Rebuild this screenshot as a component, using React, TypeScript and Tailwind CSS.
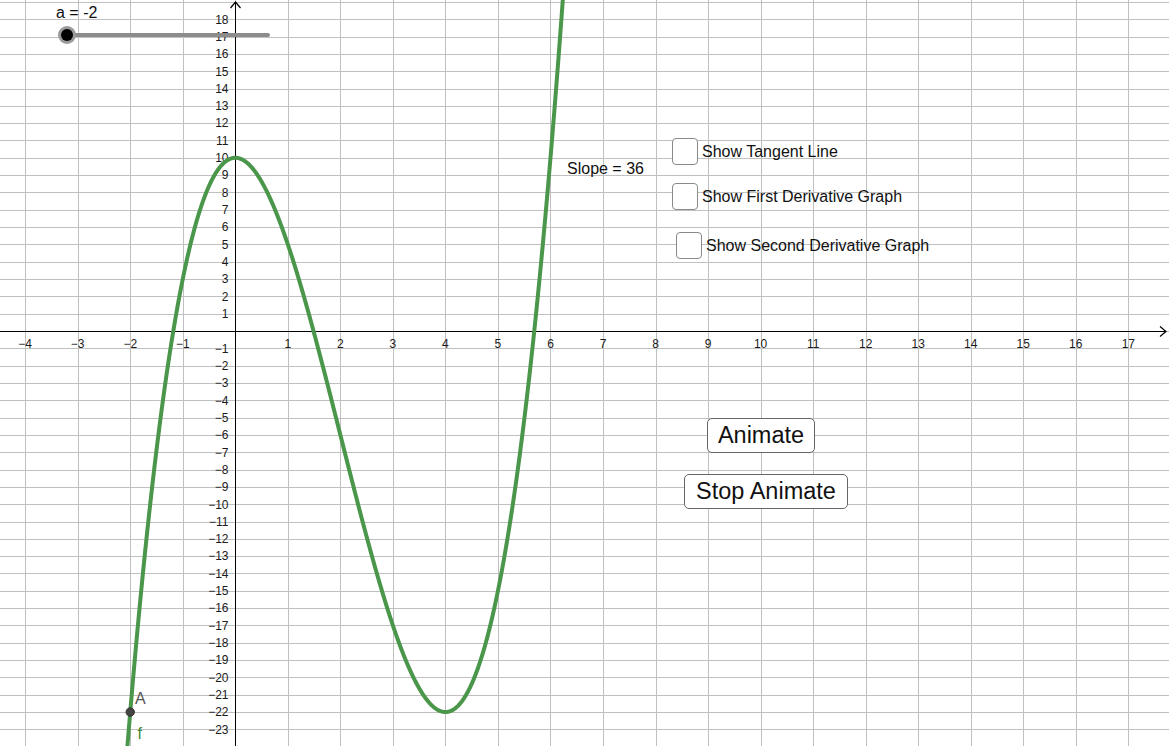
import React from "react";

const X0 = 235.3;
const SX = 52.53;
const Y0 = 331;
const SY = 17.32;
const W = 1169;
const H = 746;

const px = (x: number) => X0 + x * SX;
const py = (y: number) => Y0 - y * SY;
const f = (x: number) => x * x * x - 6 * x * x + 10;

const FONT = '"Liberation Sans", Arial, sans-serif';

function Graph() {
  const xs: number[] = [];
  for (let k = -5; k <= 18; k++) xs.push(k);
  const ys: number[] = [];
  for (let j = -24; j <= 19; j++) ys.push(j);

  const pts: string[] = [];
  for (let x = -2.12; x <= 6.3; x += 0.005) {
    pts.push(`${px(x).toFixed(2)},${py(f(x)).toFixed(2)}`);
  }
  const ax = Math.round(X0) + 0.5;
  const ay = Math.round(Y0) + 0.5;

  return (
    <svg
      width={W}
      height={H}
      viewBox={`0 0 ${W} ${H}`}
      className="absolute left-0 top-0"
      style={{ fontFamily: FONT }}
    >
      <rect x={0} y={0} width={W} height={H} fill="#ffffff" />
      <g stroke="#c0c0c0" strokeWidth={1} shapeRendering="crispEdges">
        {xs.map((k) => {
          const v = Math.round(px(k)) + 0.5;
          return <line key={`gx${k}`} x1={v} y1={0} x2={v} y2={H} />;
        })}
        {ys.map((j) => {
          const v = Math.round(py(j)) + 0.5;
          return <line key={`gy${j}`} x1={0} y1={v} x2={W} y2={v} />;
        })}
      </g>
      <g stroke="#000" strokeWidth={1.2} fill="none">
        <line x1={0} y1={ay} x2={1166} y2={ay} shapeRendering="crispEdges" />
        <line x1={ax} y1={2} x2={ax} y2={H} shapeRendering="crispEdges" />
        <polyline points={`1160,${ay - 5} 1166,${ay} 1160,${ay + 5}`} />
        <polyline points={`${ax - 5},8 ${ax},2 ${ax + 5},8`} />
      </g>
      <g fontSize={12} fill="#1a1a1a">
        {xs
          .filter((k) => k !== 0 && k >= -4 && k <= 17)
          .map((k) => (
            <text key={`lx${k}`} x={px(k)} y={347.5} textAnchor="middle">
              {k < 0 ? `\u2212${-k}` : `${k}`}
            </text>
          ))}
        {ys
          .filter((j) => j !== 0 && j >= -23 && j <= 18)
          .map((j) => (
            <text key={`ly${j}`} x={228.5} y={py(j) + 4.3} textAnchor="end">
              {j < 0 ? `\u2212${-j}` : `${j}`}
            </text>
          ))}
      </g>
      <polyline
        points={pts.join(" ")}
        fill="none"
        stroke="#4a964a"
        strokeWidth={4}
        strokeLinejoin="round"
        strokeLinecap="round"
      />
      <circle cx={px(-2)} cy={py(-22)} r={4.2} fill="#444" stroke="#333" strokeWidth={1} />
      <text x={135} y={703.5} fontSize={16} fill="#555">
        A
      </text>
      <text x={137.5} y={739} fontSize={16} fill="#3a8a3a">
        f
      </text>
    </svg>
  );
}

function CheckRow({ label, className }: { label: string; className?: string }) {
  return (
    <div className={`flex items-center gap-[4px] ${className ?? ""}`}>
      <div className="w-[26px] h-[27px] rounded-[4px] border-[1.5px] border-[#8a8a8a] bg-white" />
      <span className="text-[16px] text-[#111] leading-none whitespace-nowrap">{label}</span>
    </div>
  );
}

export default function App() {
  return (
    <div className="relative w-[1169px] h-[746px] overflow-hidden bg-white" style={{ fontFamily: FONT }}>
      <Graph />

      {/* slider widget */}
      <div className="absolute left-[56px] top-[3px] flex flex-col">
        <div className="text-[16px] leading-[20px] text-[#111]">a = -2</div>
        <div className="relative mt-[3px] ml-[2px] h-[18px] w-[214px] flex items-center">
          <div className="ml-[8px] w-[204px] h-[4px] rounded-full bg-[#8c8c8c]" />
          <div className="absolute left-0 top-0 w-[18px] h-[18px] rounded-full bg-[#9a9a9a] flex items-center justify-center">
            <div className="w-[12px] h-[12px] rounded-full bg-black" />
          </div>
        </div>
      </div>

      {/* slope text */}
      <div className="absolute left-[567px] top-[160px] text-[16px] leading-[18px] text-[#111]">Slope = 36</div>

      {/* checkboxes */}
      <div className="absolute left-[672px] top-[138px] flex flex-col">
        <CheckRow label="Show Tangent Line" />
        <CheckRow label="Show First Derivative Graph" className="mt-[18px]" />
        <CheckRow label="Show Second Derivative Graph" className="mt-[22px] ml-[4px]" />
      </div>

      {/* buttons */}
      <div className="absolute left-[684px] top-[418px] flex flex-col items-start gap-[21px]">
        <div className="ml-[23px] w-[108px] h-[35px] rounded-[5px] border border-[#666] bg-white flex items-center justify-center text-[23.5px] leading-none text-[#111]">
          Animate
        </div>
        <div className="w-[164px] h-[35px] rounded-[5px] border border-[#666] bg-white flex items-center justify-center text-[23.5px] leading-none text-[#111]">
          Stop Animate
        </div>
      </div>
    </div>
  );
}
